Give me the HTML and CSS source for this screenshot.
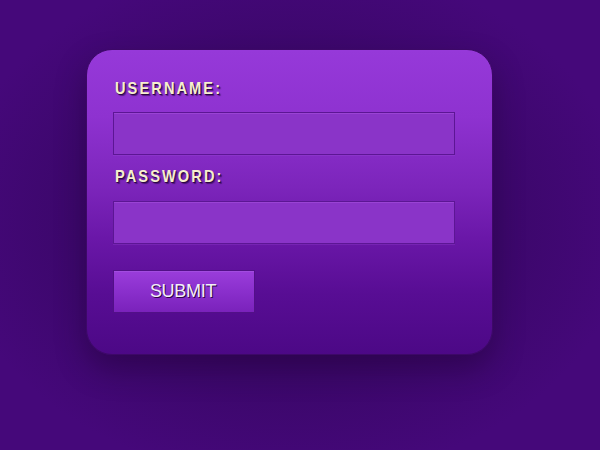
FILE: index.html
```html
<!DOCTYPE html>
<html>
<head>
<meta charset="utf-8">
<link rel="stylesheet" href="styles.css">
</head>
<body>
<div class="page">
  <form class="card">
    <label class="label">USERNAME:</label>
    <div class="field"></div>
    <label class="label label-pw">PASSWORD:</label>
    <div class="field"></div>
    <div class="button">SUBMIT</div>
  </form>
</div>
</body>
</html>
```
FILE: styles.css
```css
html, body {
  margin: 0;
  padding: 0;
}
body {
  width: 600px;
  height: 450px;
  overflow: hidden;
  background: #45087a;
  font-family: "Liberation Sans", Arial, sans-serif;
}
.page {
  width: 600px;
  height: 450px;
  padding: 49px 0 0 86px;
  box-sizing: border-box;
  background: radial-gradient(ellipse 340px 260px at 290px 220px, #32065a 0%, #3a0768 55%, #45087a 100%);
}
.card {
  display: flex;
  flex-direction: column;
  align-items: flex-start;
  width: 407px;
  height: 306px;
  box-sizing: border-box;
  margin: 0;
  padding: 30px 26px 0 26px;
  border-radius: 26px;
  border: 1px solid #3d0868;
  background: linear-gradient(180deg, #9639d9 0%, #8e32d0 22%, #7c25bb 45%, #6a17a8 62%, #580d94 80%, #4c0886 100%);
  box-shadow: 0 14px 30px rgba(30, 0, 50, 0.45);
}
.label {
  display: block;
  margin-left: 2px;
  font-size: 17px;
  line-height: 18px;
  font-weight: bold;
  letter-spacing: 2.4px;
  color: #f6efcf;
  transform: scaleX(0.86);
  transform-origin: left center;
  text-shadow: 1px 1px 0 #2c0546, 2px 2px 1px rgba(30, 0, 50, 0.5);
}
.label-pw {
  margin-top: 13px;
}
.field {
  width: 342px;
  height: 43px;
  box-sizing: border-box;
  margin-top: 14px;
  background: #8a34c8;
  border: 1px solid #5c1694;
  box-shadow: inset 0 1px 0 #9a44d4, 0 1px 0 rgba(160, 80, 220, 0.25);
}
.label-pw + .field {
  margin-top: 15px;
}
.button {
  margin-top: 26px;
  width: 142px;
  height: 43px;
  box-sizing: border-box;
  display: flex;
  align-items: center;
  justify-content: center;
  padding-right: 2px;
  background: linear-gradient(180deg, #9a3ddb 0%, #8a2fcc 50%, #7a22bb 100%);
  border: 1px solid #521088;
  box-shadow: inset 0 1px 0 #a24ce0;
  font-size: 18px;
  letter-spacing: -0.3px;
  color: #f3eef8;
  text-shadow: 1px 1px 0 #2c0546;
}
```
